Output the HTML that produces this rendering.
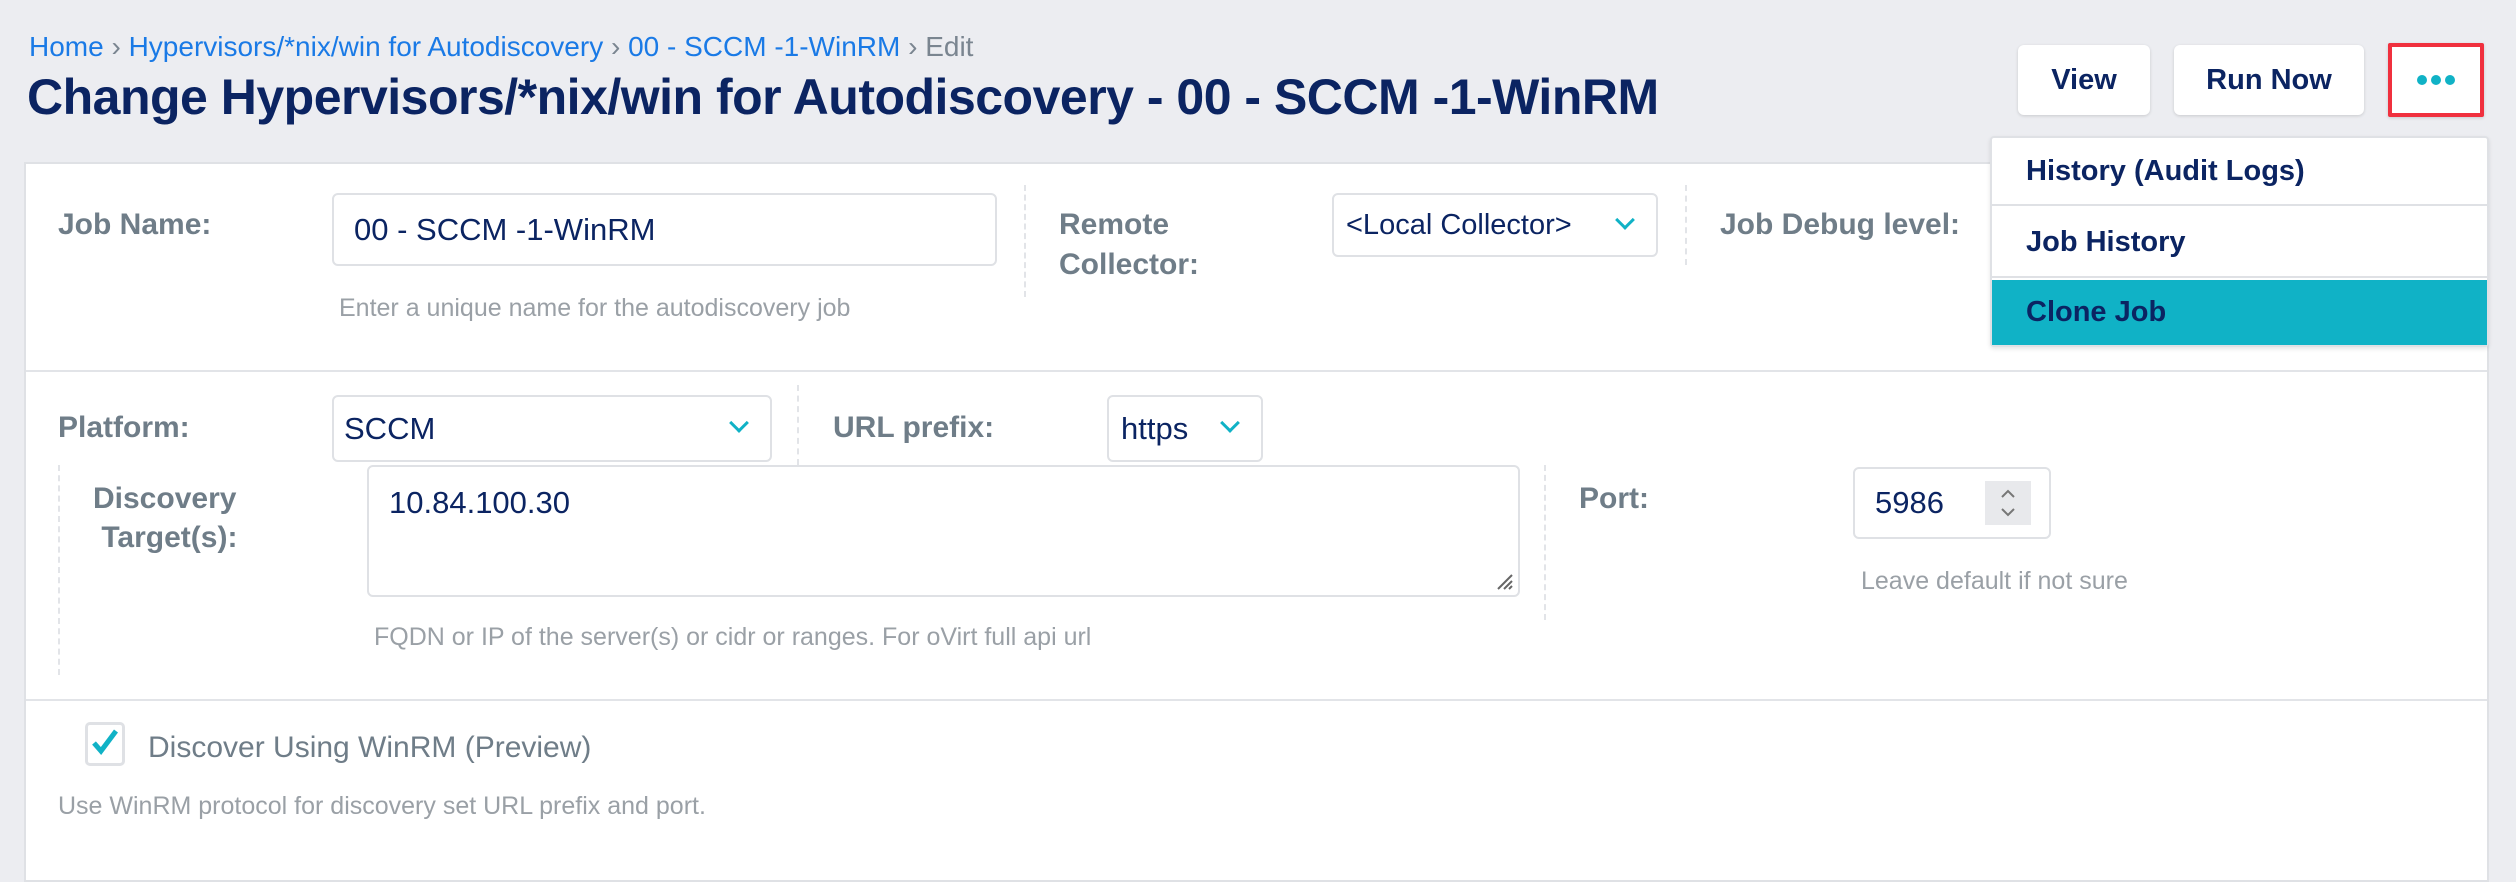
<!DOCTYPE html>
<html><head><meta charset="utf-8"><style>
*{box-sizing:border-box;margin:0;padding:0}
body{width:2516px;height:862px;background:#ecedf1;font-family:"Liberation Sans",sans-serif;position:relative;overflow:hidden;color:#0b2462}
.a{position:absolute;white-space:nowrap}
.bc{left:29px;top:31px;font-size:28px;color:#1a7ae6}
.bc .s{color:#7a8590}
.title{left:27px;top:68px;font-size:50px;font-weight:bold;color:#0b2462;letter-spacing:-0.5px}
.btn{background:#fff;border-radius:6px;box-shadow:0 1px 3px rgba(0,0,0,.15);font-weight:bold;font-size:29px;display:flex;align-items:center;justify-content:center;color:#0b2462}
.card{left:24px;top:162px;width:2465px;height:720px;background:#fff;border:2px solid #dfe1e5}
.lbl{font-size:30px;font-weight:bold;color:#6f7d88;line-height:40px}
.hint{font-size:25px;color:#9aa0a6}
.inp{background:#fff;border:2px solid #dfe1e5;border-radius:6px;font-size:31px;color:#0b2462;display:flex;align-items:center;padding-left:20px}
.dash{border-left:2px dashed #e2e4e8}
.hr{height:2px;background:#e2e4e8}
.chev{position:absolute;width:14px;height:14px;border-right:3px solid #10b2c6;border-bottom:3px solid #10b2c6;transform:rotate(45deg)}
.menu{left:1990px;top:136px;width:499px;height:211px;background:#fff;border:2px solid #dfe1e5;border-radius:4px;box-shadow:0 2px 4px rgba(0,0,0,.1)}
.mi{position:absolute;left:0;width:495px;font-size:29px;font-weight:bold;padding-left:34px;display:flex;align-items:center;color:#0b2462}
</style></head><body>
<div class="a bc">Home <span class="s">›</span> Hypervisors/*nix/win for Autodiscovery <span class="s">›</span> 00 - SCCM -1-WinRM <span class="s">› Edit</span></div>
<div class="a title">Change Hypervisors/*nix/win for Autodiscovery - 00 - SCCM -1-WinRM</div>

<div class="a card"></div>
<div class="a hr" style="left:26px;top:370px;width:2461px"></div>
<div class="a hr" style="left:26px;top:699px;width:2461px"></div>

<div class="a lbl" style="left:58px;top:205px">Job Name:</div>
<div class="a inp" style="left:332px;top:193px;width:665px;height:73px">00 - SCCM -1-WinRM</div>
<div class="a hint" style="left:339px;top:294px">Enter a unique name for the autodiscovery job</div>
<div class="a dash" style="left:1024px;top:185px;height:112px"></div>
<div class="a lbl" style="left:1059px;top:205px">Remote<br>Collector:</div>
<div class="a inp" style="left:1332px;top:193px;width:326px;height:64px;padding-left:12px;font-size:29px">&lt;Local Collector&gt;<span class="chev" style="left:284px;top:18px"></span></div>
<div class="a dash" style="left:1685px;top:185px;height:80px"></div>
<div class="a lbl" style="left:1720px;top:205px">Job Debug level:</div>

<div class="a lbl" style="left:58px;top:408px">Platform:</div>
<div class="a inp" style="left:332px;top:395px;width:440px;height:67px;padding-left:10px">SCCM<span class="chev" style="left:398px;top:19px"></span></div>
<div class="a dash" style="left:797px;top:385px;height:80px"></div>
<div class="a lbl" style="left:833px;top:408px">URL prefix:</div>
<div class="a inp" style="left:1107px;top:395px;width:156px;height:67px;padding-left:12px">https<span class="chev" style="left:114px;top:19px"></span></div>
<div class="a dash" style="left:58px;top:465px;height:210px"></div>
<div class="a lbl" style="left:93px;top:479px;line-height:39px">Discovery<br>&nbsp;Target(s):</div>
<div class="a inp" style="left:367px;top:465px;width:1153px;height:132px;align-items:flex-start;padding-top:18px">10.84.100.30
<svg style="position:absolute;right:4px;bottom:4px" width="22" height="22"><path d="M20 6L6 20M20 12L12 20M20 17L17 20" stroke="#666" stroke-width="2"/></svg></div>
<div class="a hint" style="left:374px;top:623px">FQDN or IP of the server(s) or cidr or ranges. For oVirt full api url</div>
<div class="a dash" style="left:1544px;top:465px;height:155px"></div>
<div class="a lbl" style="left:1579px;top:479px">Port:</div>
<div class="a inp" style="left:1853px;top:467px;width:198px;height:72px">5986
<div style="position:absolute;left:130px;top:12px;width:46px;height:44px;background:#e8e9ec"><svg width="46" height="44"><path d="M17 16L23 10L29 16M17 28L23 34L29 28" stroke="#777" stroke-width="2" fill="none"/></svg></div></div>
<div class="a hint" style="left:1861px;top:567px">Leave default if not sure</div>

<div class="a" style="left:85px;top:722px;width:40px;height:44px;border:3px solid #dfe1e5;border-radius:5px;background:#fff"><svg width="36" height="40" style="position:absolute;left:-2px;top:-2px"><path d="M8 20L15 28L30 8" stroke="#10b2c6" stroke-width="5" fill="none"/></svg></div>
<div class="a" style="left:148px;top:731px;font-size:30px;color:#6f7d88">Discover Using WinRM (Preview)</div>
<div class="a hint" style="left:58px;top:792px">Use WinRM protocol for discovery set URL prefix and port.</div>

<div class="a btn" style="left:2018px;top:45px;width:132px;height:70px">View</div>
<div class="a btn" style="left:2174px;top:45px;width:190px;height:70px">Run Now</div>
<div class="a btn" style="left:2388px;top:43px;width:96px;height:74px;border:4px solid #f0303e;border-radius:2px"><svg width="40" height="12"><circle cx="6" cy="6" r="5" fill="#10b2c6"/><circle cx="20" cy="6" r="5" fill="#10b2c6"/><circle cx="34" cy="6" r="5" fill="#10b2c6"/></svg></div>

<div class="a menu">
<div class="mi" style="top:0;height:68px;border-bottom:2px solid #dfe1e5">History (Audit Logs)</div>
<div class="mi" style="top:70px;height:70px;border-bottom:2px solid #dfe1e5">Job History</div>
<div class="mi" style="top:142px;height:65px;background:#10b2c6">Clone Job</div>
</div>
</body></html>
